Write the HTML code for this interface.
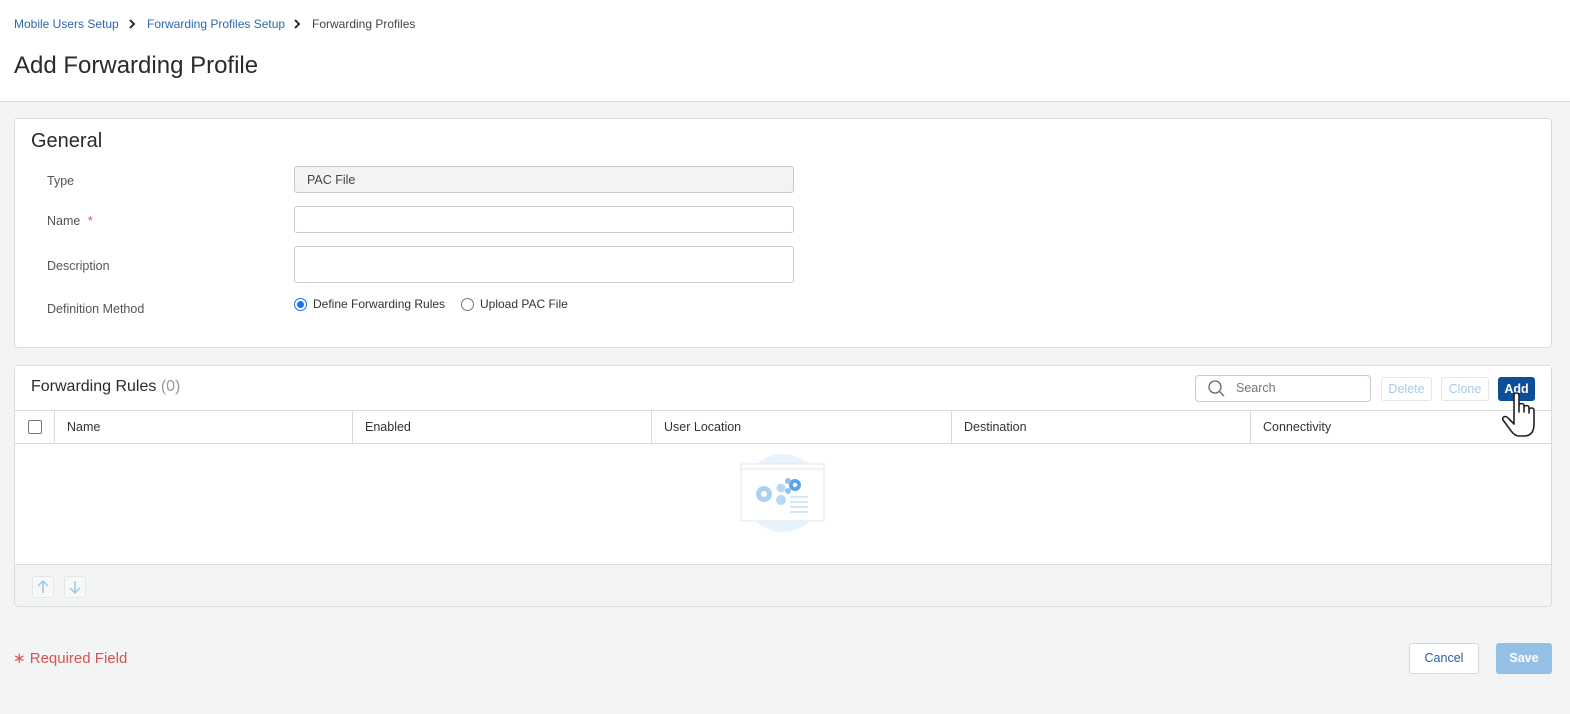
<!DOCTYPE html>
<html><head><meta charset="utf-8"><style>
*{box-sizing:border-box;margin:0;padding:0}
body{width:1570px;height:714px;background:#f3f4f4;font-family:"Liberation Sans",sans-serif;position:relative;overflow:hidden;color:#333}
.a{position:absolute}
.hdr{left:0;top:0;width:1570px;height:102px;background:#fff;border-bottom:1px solid #dcdcdc}
.bc{top:17px;font-size:12px}
.card{background:#fff;border:1px solid #dadcdc;border-radius:4px}
.lbl{font-size:12.5px;color:#555;left:47px}
.inp{left:294px;width:500px;border:1px solid #c8cacc;border-radius:3px;background:#fff}
.th{top:411px;height:33px;font-size:12.5px;line-height:33px;color:#333;border-left:1px solid #dadcdc;padding-left:12px}
.btn{border-radius:3px;font-size:12.5px;text-align:center}
</style></head><body>
<div class="a hdr"></div>
<div class="a bc" style="left:14px;color:#2c69b0">Mobile Users Setup</div>
<svg class="a" style="left:128px;top:19px" width="8" height="10" viewBox="0 0 8 10"><path d="M2 1 L6 5 L2 9" fill="none" stroke="#333" stroke-width="2"/></svg>
<div class="a bc" style="left:147px;color:#2c69b0">Forwarding Profiles Setup</div>
<svg class="a" style="left:293px;top:19px" width="8" height="10" viewBox="0 0 8 10"><path d="M2 1 L6 5 L2 9" fill="none" stroke="#333" stroke-width="2"/></svg>
<div class="a bc" style="left:312px;color:#444">Forwarding Profiles</div>
<div class="a" style="left:14px;top:52px;font-size:24px;color:#2a2a2a">Add Forwarding Profile</div>

<div class="a card" style="left:14px;top:118px;width:1538px;height:230px"></div>
<div class="a" style="left:31px;top:130px;font-size:20px;color:#2a2a2a">General</div>
<div class="a lbl" style="top:174px">Type</div>
<div class="a inp" style="top:166px;height:27px;background:#f2f3f3;font-size:12.5px;padding:6px 12px;color:#444">PAC File</div>
<div class="a lbl" style="top:214px">Name <span style="color:#d9534f;margin-left:4px">*</span></div>
<div class="a inp" style="top:206px;height:27px"></div>
<div class="a lbl" style="top:259px">Description</div>
<div class="a inp" style="top:246px;height:37px"></div>
<div class="a lbl" style="top:302px">Definition Method</div>
<div class="a" style="left:294px;top:298px;width:13px;height:13px;border:1px solid #1a73e8;border-radius:50%"><div style="margin:2px;width:7px;height:7px;border-radius:50%;background:#1a73e8"></div></div>
<div class="a" style="left:313px;top:297px;font-size:12px;color:#333">Define Forwarding Rules</div>
<div class="a" style="left:461px;top:298px;width:13px;height:13px;border:1px solid #777;border-radius:50%"></div>
<div class="a" style="left:480px;top:297px;font-size:12px;color:#333">Upload PAC File</div>

<div class="a card" style="left:14px;top:365px;width:1538px;height:242px;background:#f3f4f4"></div>
<div class="a" style="left:15px;top:366px;width:1536px;height:199px;background:#fff;border-bottom:1px solid #dadcdc"></div>
<div class="a" style="left:31px;top:378px;font-size:16px;color:#2a2a2a">Forwarding Rules <span style="color:#999">(0)</span></div>
<div class="a" style="left:1195px;top:375px;width:176px;height:27px;border:1px solid #c8cacc;border-radius:4px;background:#fff"></div>
<svg class="a" style="left:1206px;top:379px" width="20" height="20" viewBox="0 0 20 20"><circle cx="9" cy="8" r="6" fill="none" stroke="#666" stroke-width="1.3"/><path d="M13.3 12.3 L18 17" stroke="#666" stroke-width="1.3"/></svg>
<div class="a" style="left:1236px;top:381px;font-size:12.5px;color:#777">Search</div>
<div class="a btn" style="left:1381px;top:377px;width:51px;height:24px;border:1px solid #e4e6e8;color:#a9c9e6;line-height:22px;background:#fff">Delete</div>
<div class="a btn" style="left:1441px;top:377px;width:48px;height:24px;border:1px solid #e4e6e8;color:#a9c9e6;line-height:22px;background:#fff">Clone</div>
<div class="a btn" style="left:1498px;top:377px;width:37px;height:24px;background:#0e4e96;color:#fff;font-weight:bold;line-height:24px">Add</div>
<div class="a" style="left:15px;top:410px;width:1536px;height:1px;background:#dadcdc"></div>
<div class="a" style="left:15px;top:443px;width:1536px;height:1px;background:#dadcdc"></div>
<div class="a" style="left:28px;top:420px;width:14px;height:14px;border:1px solid #777;border-radius:2px;background:#fff"></div>
<div class="a th" style="left:54px;width:298px">Name</div>
<div class="a th" style="left:352px;width:299px">Enabled</div>
<div class="a th" style="left:651px;width:300px">User Location</div>
<div class="a th" style="left:951px;width:300px">Destination</div>
<div class="a th" style="left:1250px;width:300px">Connectivity</div>
<svg class="a" style="left:1500px;top:392px" width="40" height="48" viewBox="0 0 40 48"><path d="M14 4 Q14 1 16.5 1 Q19 1 19 4 L19 20 L19 14 Q19 11.5 21.5 11.5 Q24 11.5 24 14 L24 20 L24 16 Q24 13.5 26.5 13.5 Q29 13.5 29 16 L29 21 L29 18.5 Q29 16 31.5 16 Q34 16 34 18.5 L34 32 Q34 44 24 44 L19 44 Q14 44 9 36 L3 28 Q2 25 5 24.5 Q7 24.5 9 27 L14 32 Z" fill="#fff" stroke="#222" stroke-width="1.6" stroke-linejoin="round"/></svg>
<svg class="a" style="left:740px;top:453px" width="86" height="80" viewBox="0 0 86 80"><circle cx="43" cy="40" r="39" fill="#e8f3fd"/><rect x="1" y="11" width="83" height="57" fill="#fff" stroke="#e3e6e8"/><line x1="1" y1="16" x2="84" y2="16" stroke="#e3e6e8"/><circle cx="24" cy="41" r="8" fill="#a8d2f5"/><circle cx="24" cy="41" r="3" fill="#fff"/><circle cx="41" cy="47" r="5" fill="#b5d9f6"/><circle cx="41" cy="35" r="4.5" fill="#b5d9f6"/><circle cx="55" cy="32" r="6" fill="#5aa5e8"/><circle cx="55" cy="32" r="2.2" fill="#fff"/><circle cx="48" cy="28" r="3" fill="#8cc3ef"/><circle cx="48" cy="38" r="3" fill="#8cc3ef"/><g stroke="#b5d9f6" stroke-width="1.2"><line x1="50" y1="44" x2="68" y2="44"/><line x1="50" y1="49" x2="68" y2="49"/><line x1="50" y1="54" x2="68" y2="54"/><line x1="50" y1="59" x2="68" y2="59"/></g></svg>
<div class="a" style="left:32px;top:576px;width:22px;height:22px;border:1px solid #e4e6e8;border-radius:3px;background:#f7f8f8"></div>
<div class="a" style="left:64px;top:576px;width:22px;height:22px;border:1px solid #e4e6e8;border-radius:3px;background:#f7f8f8"></div>
<svg class="a" style="left:32px;top:576px" width="54" height="22" viewBox="0 0 54 22"><path d="M11 17 V5 M6 10 L11 5 L16 10" fill="none" stroke="#9cc6ea" stroke-width="1.5"/><path d="M43 5 V17 M38 12 L43 17 L48 12" fill="none" stroke="#9cc6ea" stroke-width="1.5"/></svg>

<div class="a" style="left:13px;top:649px;font-size:15px;color:#d9534f">∗ Required Field</div>
<div class="a btn" style="left:1409px;top:643px;width:70px;height:31px;border:1px solid #d6d8da;background:#fff;color:#2c5f9e;line-height:29px">Cancel</div>
<div class="a btn" style="left:1496px;top:643px;width:56px;height:31px;background:#95c0e5;color:#fff;font-weight:bold;line-height:31px">Save</div>
</body></html>
